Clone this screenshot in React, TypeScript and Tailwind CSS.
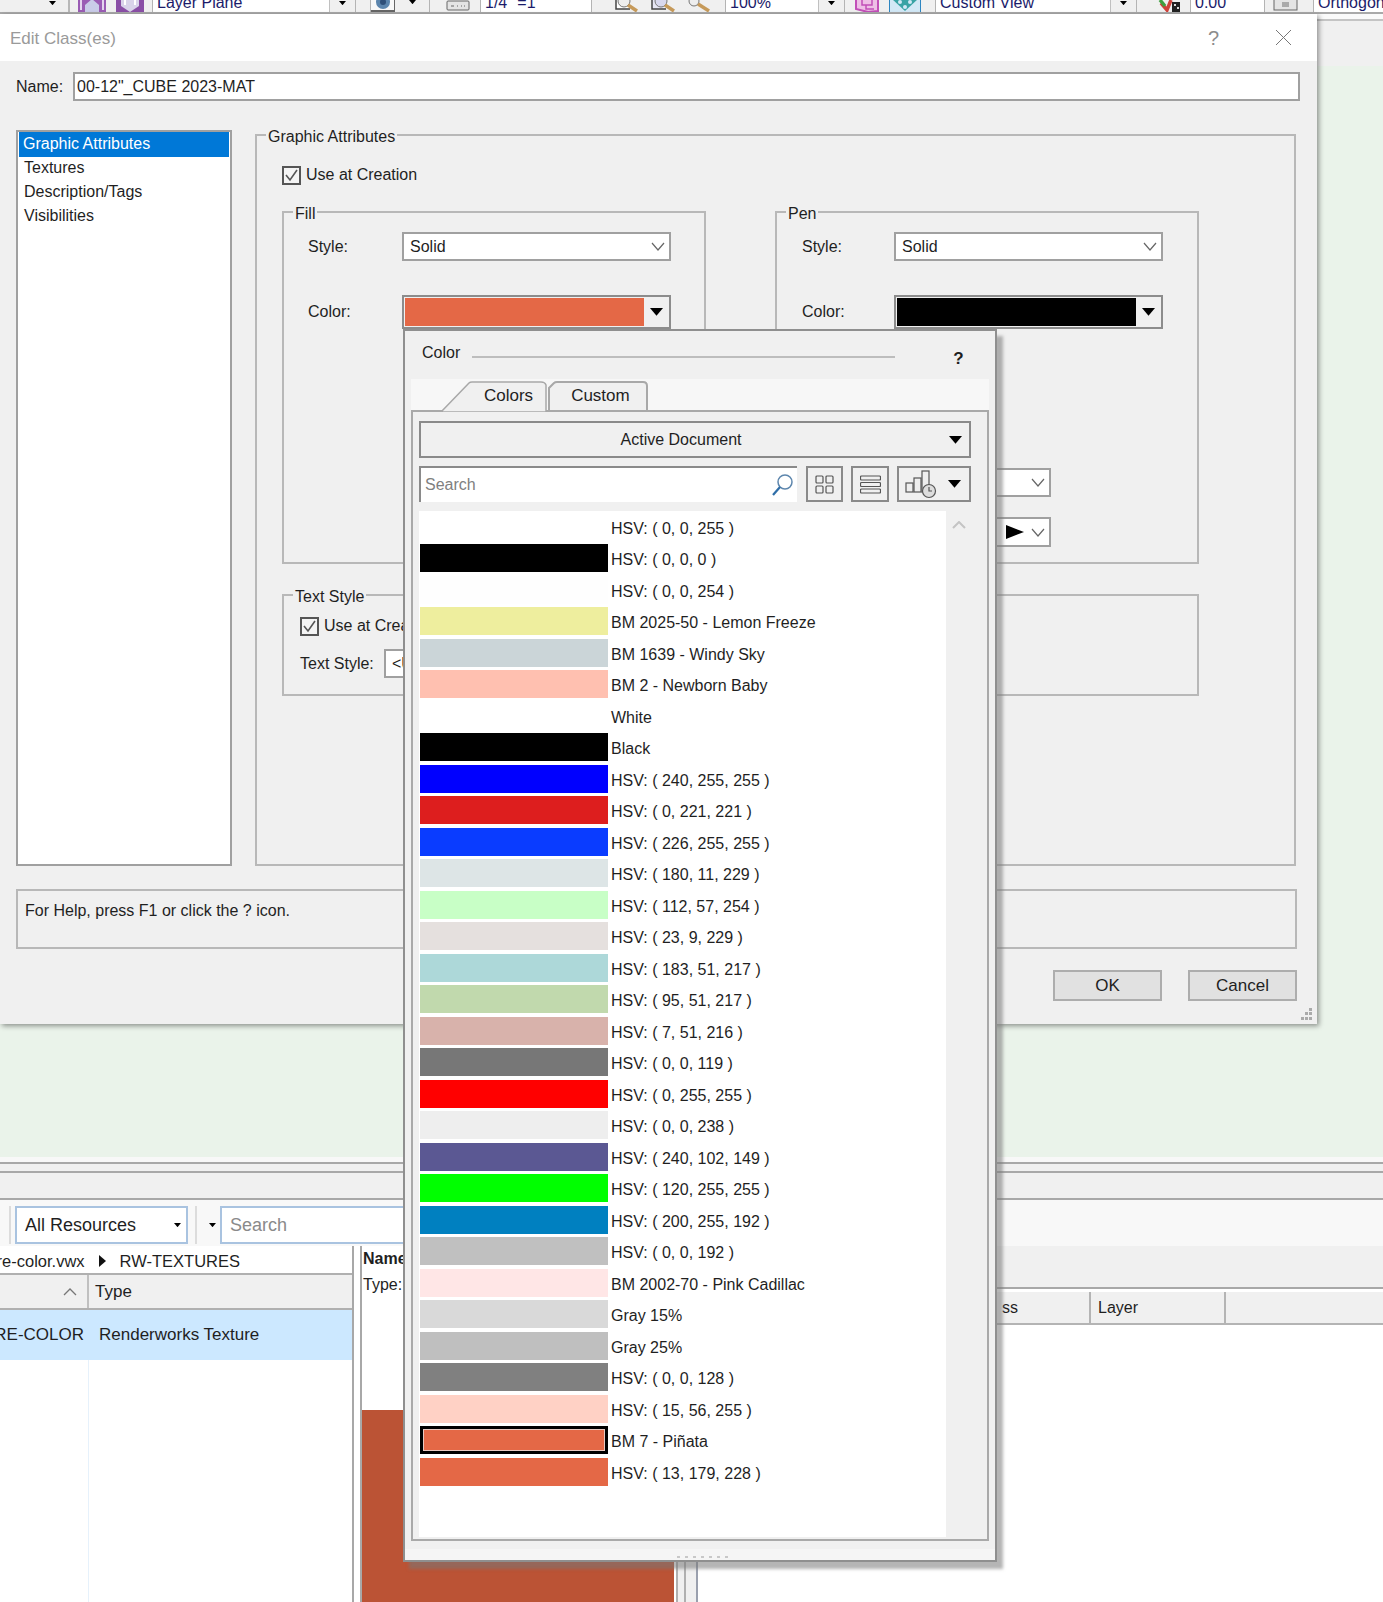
import React from 'react';

const FONT = '[font-family:"Liberation_Sans",Arial,sans-serif]';

const swatches: { color: string; label: string; selected?: boolean }[] = [
  { color: '#ffffff', label: 'HSV: ( 0, 0, 255 )' },
  { color: '#000000', label: 'HSV: ( 0, 0, 0 )' },
  { color: '#fefefe', label: 'HSV: ( 0, 0, 254 )' },
  { color: '#eeee9e', label: 'BM 2025-50 - Lemon Freeze' },
  { color: '#cbd5d8', label: 'BM 1639 - Windy Sky' },
  { color: '#ffc0b0', label: 'BM 2 - Newborn Baby' },
  { color: '#ffffff', label: 'White' },
  { color: '#000000', label: 'Black' },
  { color: '#0000ff', label: 'HSV: ( 240, 255, 255 )' },
  { color: '#dd1e1e', label: 'HSV: ( 0, 221, 221 )' },
  { color: '#0a3cff', label: 'HSV: ( 226, 255, 255 )' },
  { color: '#dde5e6', label: 'HSV: ( 180, 11, 229 )' },
  { color: '#c8ffc6', label: 'HSV: ( 112, 57, 254 )' },
  { color: '#e5e0de', label: 'HSV: ( 23, 9, 229 )' },
  { color: '#add8d9', label: 'HSV: ( 183, 51, 217 )' },
  { color: '#c1d9ad', label: 'HSV: ( 95, 51, 217 )' },
  { color: '#d8b2ab', label: 'HSV: ( 7, 51, 216 )' },
  { color: '#777777', label: 'HSV: ( 0, 0, 119 )' },
  { color: '#ff0000', label: 'HSV: ( 0, 255, 255 )' },
  { color: '#eeeeee', label: 'HSV: ( 0, 0, 238 )' },
  { color: '#5b5893', label: 'HSV: ( 240, 102, 149 )' },
  { color: '#00ff00', label: 'HSV: ( 120, 255, 255 )' },
  { color: '#0080c0', label: 'HSV: ( 200, 255, 192 )' },
  { color: '#c0c0c0', label: 'HSV: ( 0, 0, 192 )' },
  { color: '#ffe6e6', label: 'BM 2002-70 - Pink Cadillac' },
  { color: '#d9d9d9', label: 'Gray 15%' },
  { color: '#bfbfbf', label: 'Gray 25%' },
  { color: '#808080', label: 'HSV: ( 0, 0, 128 )' },
  { color: '#ffd1c5', label: 'HSV: ( 15, 56, 255 )' },
  { color: '#e46846', label: 'BM 7 - Piñata', selected: true },
  { color: '#e46846', label: 'HSV: ( 13, 179, 228 )' },
];

const Caret = ({ size = 14 }: { size?: number }) => (
  <svg width={size} height={size * 0.6} viewBox="0 0 10 6" className="shrink-0">
    <polygon points="0,0 10,0 5,6" fill="#000" />
  </svg>
);

const Chevron = () => (
  <svg width="14" height="9" viewBox="0 0 14 9" className="shrink-0">
    <polyline points="1,1 7,8 13,1" fill="none" stroke="#666" strokeWidth="1.2" />
  </svg>
);

const Checkbox = () => (
  <div className="flex h-[19px] w-[19px] shrink-0 items-center justify-center border-2 border-[#555] bg-[#f4f4f4]">
    <svg width="15" height="15" viewBox="0 0 15 15">
      <polyline points="2,7 6,12 13,2" fill="none" stroke="#555" strokeWidth="1.6" />
    </svg>
  </div>
);

const Group = ({
  label,
  className,
  children,
}: {
  label: string;
  className: string;
  children: React.ReactNode;
}) => (
  <fieldset className={`border-2 border-[#b8b8b8] ${className}`}>
    <legend className="ml-[9px] px-[2px] text-[16px] leading-[20px]">
      <span className="relative top-[2px]">{label}</span>
    </legend>
    {children}
  </fieldset>
);

const StyleSelect = () => (
  <div className="flex h-[29px] w-[269px] items-center justify-between border-2 border-[#a0a0a0] bg-white pl-[6px] pr-[4px]">
    <span>Solid</span>
    <Chevron />
  </div>
);

const ColorButton = ({ color }: { color: string }) => (
  <div className="flex h-[34px] w-[269px] items-center border-2 border-[#8c8c8c] bg-[#f0f0f0] pl-[1px]">
    <div className="h-[28px] w-[239px]" style={{ backgroundColor: color }} />
    <div className="flex flex-1 justify-center">
      <Caret size={13} />
    </div>
  </div>
);

const ToolField = ({ text, className }: { text: string; className: string }) => (
  <div className={`relative h-[12px] shrink-0 overflow-hidden border-x border-[#b4b4b4] bg-white ${className}`}>
    <div className="-mt-[6px] pl-[4px] text-[16px] leading-[18px] whitespace-nowrap text-[#1b1b6a]">{text}</div>
  </div>
);

const ToolSelect = ({ text, className }: { text: string; className: string }) => (
  <div className={`flex h-[12px] shrink-0 overflow-hidden border-x border-[#b4b4b4] bg-white ${className}`}>
    <div className="-mt-[6px] flex-1 pl-[4px] text-[16px] leading-[18px] whitespace-nowrap text-[#1b1b6a]">{text}</div>
    <div className="flex w-[26px] justify-center border-l border-[#c0c0c0] bg-[#f0f0f0] pt-[1px]">
      <Caret size={7} />
    </div>
  </div>
);

const Toolbar = () => (
  <div className="flex h-[14px] shrink-0 overflow-hidden border-b-2 border-[#a9a9a9] bg-[#f0f0f0]">
    <div className="flex w-[70px] shrink-0 justify-end border-r-2 border-[#b8b8b8] pt-[1px] pr-[12px]">
      <Caret size={7} />
    </div>
    <svg width="28" height="12" viewBox="0 0 28 12" className="ml-[8px] shrink-0">
      <rect x="0" y="-2" width="28" height="14" fill="#9a5cb4" />
      <path d="M7 12 V5 L14 -1 L21 5 V12 Z" fill="#c9cbe8" />
      <path d="M3 0 V10 M25 0 V10" stroke="#e4d5ee" strokeWidth="2" />
    </svg>
    <svg width="28" height="12" viewBox="0 0 28 12" className="ml-[10px] shrink-0">
      <rect x="0" y="-2" width="28" height="14" fill="#8a4fa6" />
      <path d="M5 -2 V6 L14 12 L23 6 V-2 Z" fill="#d9d3ea" />
      <path d="M9 0 V5 M19 0 V5" stroke="#fff" strokeWidth="2" />
    </svg>
    <ToolSelect text="Layer Plane" className="ml-[8px] w-[204px]" />
    <div className="ml-[14px] flex h-[12px] w-[60px] shrink-0 border-x border-[#b4b4b4]">
      <div className="flex w-[24px] justify-center border-r border-b-2 border-[#666] bg-[#f8f8f8]">
        <svg width="16" height="10" viewBox="0 0 16 10">
          <circle cx="8" cy="2" r="7" fill="#5c85ad" />
          <circle cx="8" cy="2" r="3" fill="#2f4f78" />
        </svg>
      </div>
      <div className="flex flex-1 justify-center">
        <Caret size={7} />
      </div>
    </div>
    <svg width="24" height="12" viewBox="0 0 24 12" className="ml-[16px] shrink-0">
      <rect x="1" y="1" width="22" height="9" rx="1" fill="#e4e4e4" stroke="#666" />
      <path d="M5 6h3M11 6h1M15 6h1M18 6h1" stroke="#666" />
    </svg>
    <ToolField text="1/4&quot; =1'" className="ml-[10px] w-[112px]" />
    <svg width="26" height="12" viewBox="0 0 26 12" className="ml-[22px] shrink-0">
      <path d="M2 -2 V9 H16" fill="#fff" stroke="#444" strokeWidth="1.5" />
      <circle cx="10" cy="1" r="6" fill="#eee" stroke="#777" />
      <path d="M14 5 L23 11" stroke="#c69a5a" strokeWidth="3.5" />
    </svg>
    <svg width="26" height="12" viewBox="0 0 26 12" className="ml-[10px] shrink-0">
      <path d="M2 -2 V9 H16" fill="#e6e6f4" stroke="#444" strokeWidth="1.5" />
      <circle cx="11" cy="1" r="6" fill="#d8d8ee" stroke="#777" />
      <path d="M15 5 L24 11" stroke="#c69a5a" strokeWidth="3.5" />
    </svg>
    <svg width="26" height="12" viewBox="0 0 26 12" className="ml-[10px] shrink-0">
      <circle cx="8" cy="1" r="5" fill="#eee" stroke="#777" />
      <path d="M12 4 L23 11" stroke="#c69a5a" strokeWidth="3.5" />
    </svg>
    <ToolSelect text="100%" className="ml-[13px] w-[120px]" />
    <svg width="26" height="13" viewBox="0 0 26 13" className="ml-[9px] shrink-0">
      <path d="M2 -2 V9 L14 12 L24 11 V-2 Z" fill="#eebfe6" stroke="#c24fb8" strokeWidth="2" />
      <path d="M8 -2 V5 H18 V-2 M12 5 V9 H20" fill="none" stroke="#c24fb8" strokeWidth="1.5" />
    </svg>
    <svg width="32" height="14" viewBox="0 0 32 14" className="ml-[9px] shrink-0">
      <rect x="0.5" y="-2" width="31" height="15" fill="#d2e8f6" stroke="#2e86c1" />
      <path d="M3 -1 L16 11 L29 -1 Z" fill="#38a3a5" />
      <circle cx="11" cy="2" r="2" fill="#d2e8f6" />
      <circle cx="21" cy="2" r="2" fill="#d2e8f6" />
      <circle cx="16" cy="7" r="2" fill="#d2e8f6" />
    </svg>
    <ToolSelect text="Custom View" className="ml-[14px] w-[202px]" />
    <svg width="26" height="12" viewBox="0 0 26 12" className="ml-[20px] shrink-0">
      <path d="M4 3 L10 10 L14 0" fill="none" stroke="#d0423a" strokeWidth="3.5" />
      <path d="M3 0 L8 6" stroke="#3f9f3f" strokeWidth="3.5" />
      <rect x="15" y="2" width="8" height="10" fill="#222" />
      <rect x="17" y="4" width="2" height="2" fill="#ddd" />
      <rect x="20" y="7" width="2" height="2" fill="#ddd" />
    </svg>
    <ToolField text="0.00" className="ml-[7px] w-[75px]" />
    <svg width="25" height="12" viewBox="0 0 25 12" className="ml-[8px] shrink-0">
      <rect x="1" y="-2" width="23" height="12" fill="#e4e4e4" stroke="#666" />
      <rect x="9" y="2" width="7" height="5" fill="#aaa" />
    </svg>
    <ToolField text="Orthogonal" className="ml-[15px] w-[80px]" />
  </div>
);

const MainWindow = () => (
  <div className="flex h-[1602px] w-[1383px] flex-col overflow-hidden bg-white text-[#1f1f1f]">
    <Toolbar />
    <div className="h-[52px] shrink-0 bg-[#f0f0f0]">
      <div className="h-[7px] border-b-2 border-[#c4c4c4] bg-[#fafafa]" />
    </div>
    <div className="h-[1091px] shrink-0 bg-[#eaf3ea]" />
    <div className="h-[5px] shrink-0 bg-[#f8f8f8]" />
    <div className="h-[11px] shrink-0 border-y-2 border-[#a8a8a8] bg-[#f0f0f0]" />
    <div className="h-[27px] shrink-0 border-b-2 border-[#a8a8a8] bg-[#f0f0f0]" />

    {/* resource manager toolbar */}
    <div className="flex h-[46px] shrink-0 items-start bg-[#f8f8f8] pt-[6px]">
      <div className="ml-[9px] h-[38px] w-[2px] bg-[#dcdcdc]" />
      <div className="ml-[4px] flex h-[38px] w-[173px] items-center justify-between border-2 border-[#a9c3e0] bg-white pl-[8px] pr-[5px] text-[18px]">
        <span>All Resources</span>
        <Caret size={7} />
      </div>
      <div className="ml-[7px] h-[38px] w-[2px] bg-[#dcdcdc]" />
      <div className="ml-[12px] flex h-[38px] items-center">
        <Caret size={7} />
      </div>
      <div className="ml-[4px] flex h-[38px] w-[300px] items-center border-2 border-[#a9c3e0] bg-white pl-[8px] text-[18px] text-[#8a8a8a]">
        Search
      </div>
    </div>

    <div className="flex min-h-0 flex-1">
      {/* resource list */}
      <div className="flex w-[354px] shrink-0 flex-col border-r-2 border-[#a8a8a8] bg-white">
        <div className="flex h-[27px] shrink-0 items-center justify-end overflow-hidden pr-[112px] pt-[3px] text-[16.5px] whitespace-nowrap">
          <span>re-color.vwx</span>
          <svg width="7" height="12" viewBox="0 0 7 12" className="mx-[14px] shrink-0">
            <polygon points="0,0 7,6 0,12" fill="#111" />
          </svg>
          <span>RW-TEXTURES</span>
        </div>
        <div className="flex h-[37px] shrink-0 border-y-2 border-[#b0b0b0] bg-[#f0f0f0]">
          <div className="flex w-[89px] items-center justify-end border-r-2 border-[#c0c0c0] pr-[10px]">
            <svg width="14" height="8" viewBox="0 0 14 8">
              <polyline points="1,7 7,1 13,7" fill="none" stroke="#777" strokeWidth="1.3" />
            </svg>
          </div>
          <div className="flex items-center pl-[6px] text-[17px]">Type</div>
        </div>
        <div className="flex h-[50px] shrink-0 items-center bg-[#cce8ff] text-[17px]">
          <div className="flex w-[89px] justify-end overflow-hidden pr-[5px] whitespace-nowrap">RE-COLOR</div>
          <div className="pl-[10px]">Renderworks Texture</div>
        </div>
        <div className="ml-[88px] w-[1px] flex-1 bg-[#e6f1fb]" />
      </div>

      {/* preview */}
      <div className="ml-[6px] flex w-[314px] shrink-0 flex-col border-l-2 border-[#a8a8a8] bg-white">
        <div className="h-[164px] shrink-0 pl-[1px] text-[16px] leading-[26px]">
          <div className="font-bold">Name</div>
          <div>Type:</div>
        </div>
        <div className="flex-1 bg-[#bb5335]" />
      </div>
      <div className="ml-[2px] w-[10px] shrink-0 border-x-2 border-[#b0b0b0] bg-[#f0f0f0]" />
      <div className="w-[12px] shrink-0 border-r-2 border-[#9aa0ae] bg-[#f0f0f0]" />

      {/* objects table */}
      <div className="flex min-w-0 flex-1 flex-col">
        <div className="h-[41px] shrink-0 bg-[#f0f0f0]" />
        <div className="h-[5px] shrink-0 border-t-2 border-[#a8a8a8] bg-white" />
        <div className="flex h-[33px] shrink-0 border-b-2 border-[#b4b4b4] bg-[#f0f0f0] text-[16px] leading-[31px]">
          <div className="w-[393px] border-r-2 border-[#b4b4b4] pl-[304px]">ss</div>
          <div className="w-[135px] border-r-2 border-[#b4b4b4] pl-[7px]">Layer</div>
        </div>
      </div>
    </div>
  </div>
);

const EditClassDialog = () => (
  <div className="absolute left-0 top-[14px] flex h-[1010px] w-[1317px] flex-col bg-[#f0f0f0] text-[16px] text-[#1f1f1f] shadow-[2px_2px_5px_rgba(0,0,0,0.4)]">
    <div className="flex h-[47px] shrink-0 items-center bg-white">
      <span className="pl-[10px] pt-[3px] text-[17px] text-[#9a9a9a]">Edit Class(es)</span>
      <span className="ml-auto text-[20px] font-light text-[#8c8c8c]">?</span>
      <svg width="17" height="17" viewBox="0 0 17 17" className="ml-[56px] mr-[25px]">
        <path d="M1 1 L16 16 M16 1 L1 16" stroke="#777" strokeWidth="1" />
      </svg>
    </div>

    <div className="mt-[11px] flex h-[29px] shrink-0 items-center pl-[16px] pr-[17px]">
      <span className="w-[57px]">Name:</span>
      <div className="flex h-[29px] flex-1 items-center border-2 border-[#a0a0a0] bg-white pl-[2px]">00-12"_CUBE 2023-MAT</div>
    </div>

    <div className="mt-[24px] flex h-[741px] shrink-0 pl-[16px]">
      <div className="mt-[5px] h-[736px] w-[216px] border-2 border-[#a0a0a0] bg-white px-[1px]">
        <div className="flex h-[25px] items-center bg-[#0078d7] pb-[2px] pl-[4px] text-white">Graphic Attributes</div>
        <div className="flex h-[24px] items-center pb-[2px] pl-[5px]">Textures</div>
        <div className="flex h-[24px] items-center pb-[2px] pl-[5px]">Description/Tags</div>
        <div className="flex h-[24px] items-center pb-[2px] pl-[5px]">Visibilities</div>
      </div>

      <Group label="Graphic Attributes" className="ml-[23px] h-[741px] w-[1041px]">
        <div className="pl-[25px] pt-[18px]">
          <div className="flex items-center gap-[5px]">
            <Checkbox />
            <span>Use at Creation</span>
          </div>
          <div className="mt-[15px] flex gap-[69px]">
            <Group label="Fill" className="h-[362px] w-[424px]">
              <div className="flex items-center pt-[10px]">
                <span className="w-[118px] pl-[24px]">Style:</span>
                <StyleSelect />
              </div>
              <div className="mt-[34px] flex items-center">
                <span className="w-[118px] pl-[24px]">Color:</span>
                <ColorButton color="#e46846" />
              </div>
            </Group>
            <Group label="Pen" className="h-[362px] w-[424px]">
              <div className="flex items-center pt-[10px]">
                <span className="w-[117px] pl-[25px]">Style:</span>
                <StyleSelect />
              </div>
              <div className="mt-[34px] flex items-center">
                <span className="w-[117px] pl-[25px]">Color:</span>
                <ColorButton color="#000000" />
              </div>
              <div className="ml-[117px] mt-[139px] flex h-[29px] w-[157px] items-center justify-end border-2 border-[#a0a0a0] bg-white pr-[4px]">
                <Chevron />
              </div>
              <div className="ml-[117px] mt-[20px] flex h-[30px] w-[157px] items-center justify-end gap-[7px] border-2 border-[#a0a0a0] bg-white pr-[4px]">
                <svg width="18" height="14" viewBox="0 0 18 14">
                  <polygon points="0,0 18,7 0,14" fill="#000" />
                </svg>
                <Chevron />
              </div>
            </Group>
          </div>
          <Group label="Text Style" className="mt-[21px] h-[111px] w-[917px]">
            <div className="flex items-center gap-[5px] pl-[16px] pt-[9px]">
              <Checkbox />
              <span className="whitespace-nowrap">Use at Creation</span>
            </div>
            <div className="mt-[11px] flex items-center pl-[16px]">
              <span className="w-[84px]">Text Style:</span>
              <div className="flex h-[29px] w-[220px] items-center border-2 border-[#a0a0a0] bg-white pl-[6px]">&lt;Unstyled&gt;</div>
            </div>
          </Group>
        </div>
      </Group>
    </div>

    <div className="ml-[16px] mt-[23px] h-[60px] w-[1281px] shrink-0 border-2 border-[#b8b8b8] pl-[7px] pt-[8px]">
      For Help, press F1 or click the ? icon.
    </div>

    <div className="mt-[21px] flex shrink-0 justify-end gap-[26px] pr-[20px]">
      <div className="flex h-[31px] w-[109px] items-center justify-center border-2 border-[#adadad] bg-[#e1e1e1] text-[17px]">OK</div>
      <div className="flex h-[31px] w-[109px] items-center justify-center border-2 border-[#adadad] bg-[#e1e1e1] text-[17px]">Cancel</div>
    </div>

    {/* resize grip */}
    <svg width="13" height="13" viewBox="0 0 13 13" className="absolute bottom-[3px] right-[4px]">
      <g fill="#aaa">
        <rect x="9" y="0" width="3" height="3" />
        <rect x="5" y="4" width="3" height="3" />
        <rect x="9" y="4" width="3" height="3" />
        <rect x="1" y="9" width="3" height="3" />
        <rect x="5" y="9" width="3" height="3" />
        <rect x="9" y="9" width="3" height="3" />
      </g>
    </svg>
  </div>
);

const ColorPopup = () => (
  <div className="absolute left-[403px] top-[329px] flex h-[1233px] w-[594px] flex-col border-2 border-[#8f8f8f] bg-[#f0f0f0] text-[16px] text-[#1f1f1f] shadow-[6px_7px_3px_rgba(120,120,120,0.55)]">
    <div className="flex h-[48px] shrink-0 items-start pl-[17px]">
      <span className="mt-[12px] leading-[20px]">Color</span>
      <div className="ml-[12px] mt-[25px] h-[2px] w-[423px] bg-[#bdbdbd]" />
      <span className="ml-[58px] mt-[18px] text-[17px] font-bold leading-[20px]">?</span>
    </div>

    {/* tab strip */}
    <div className="relative mx-[6px] flex h-[31px] shrink-0 items-center bg-[#f7f7f7] pt-[3px]">
      <svg width="240" height="33" viewBox="0 0 240 33" className="absolute left-0 top-0">
        <path d="M30 33 L58 4 Q59 3 61 3 H130 Q134 3 135 6 V33 Z" fill="#f0f0f0" stroke="#a8a8a8" strokeWidth="1.5" />
        <path d="M138 31 V9 L143 4 Q144 3 146 3 H232 Q236 3 236 7 V31" fill="#f0f0f0" stroke="#a8a8a8" strokeWidth="2" />
      </svg>
      <span className="relative ml-[73px] text-[17px]">Colors</span>
      <span className="relative ml-[38px] text-[17px]">Custom</span>
    </div>

    {/* tab panel */}
    <div className="mx-[6px] flex h-[1131px] shrink-0 flex-col border-2 border-[#a9a9a9] pl-[6px] pt-[9px]">
      <div className="relative flex h-[37px] w-[552px] shrink-0 items-center justify-center border-2 border-[#8a8a8a]">
        <span className="-ml-[28px]">Active Document</span>
        <div className="absolute right-[7px] top-[13px]">
          <Caret size={13} />
        </div>
      </div>
      <div className="mt-[8px] flex h-[36px] shrink-0 gap-[8px]">
        <div className="flex w-[378px] items-center justify-between border-l-2 border-t-2 border-[#8a8a8a] bg-white pl-[4px] pr-[3px] text-[#808080]">
          <span>Search</span>
          <svg width="24" height="24" viewBox="0 0 24 24">
            <circle cx="15" cy="9" r="7" fill="none" stroke="#5d86ad" strokeWidth="1.5" />
            <path d="M10 14 L3 22" stroke="#2f6ea8" strokeWidth="2.2" />
          </svg>
        </div>
        <div className="ml-[1px] flex w-[37px] items-center justify-center border-2 border-[#8a8a8a]">
          <svg width="19" height="19" viewBox="0 0 19 19" fill="none" stroke="#555" strokeWidth="1.2">
            <rect x="1" y="1" width="7" height="7" rx="1" />
            <rect x="11" y="1" width="7" height="7" rx="1" />
            <rect x="1" y="11" width="7" height="7" rx="1" />
            <rect x="11" y="11" width="7" height="7" rx="1" />
          </svg>
        </div>
        <div className="flex w-[38px] items-center justify-center border-2 border-[#8a8a8a]">
          <svg width="21" height="19" viewBox="0 0 21 19" fill="none" stroke="#555" strokeWidth="1.2">
            <rect x="0.5" y="1" width="20" height="4" rx="1" />
            <rect x="0.5" y="7.5" width="20" height="4" rx="1" />
            <rect x="0.5" y="14" width="20" height="4" rx="1" />
          </svg>
        </div>
        <div className="flex w-[74px] items-center border-2 border-[#8a8a8a] pl-[6px]">
          <svg width="32" height="30" viewBox="0 0 32 30" fill="#eee" stroke="#555" strokeWidth="1.2">
            <rect x="1" y="14" width="7" height="9" />
            <rect x="9" y="9" width="7" height="14" />
            <rect x="17" y="2" width="7" height="21" />
            <circle cx="24" cy="22" r="6.5" fill="#ddd" />
            <path d="M24 18 V22 H27" fill="none" />
          </svg>
          <div className="ml-[11px]">
            <Caret size={13} />
          </div>
        </div>
      </div>
      <div className="mt-[9px] flex h-[1026px] shrink-0">
        <div className="w-[527px] overflow-hidden bg-white">
          {swatches.map((s, i) => (
            <div key={i} className="flex h-[31.5px] items-center">
              <div
                className={`ml-[1px] h-[28px] w-[188px] shrink-0 ${s.selected ? 'border-[3px] border-black outline outline-1 -outline-offset-4 outline-[#e8c8c0]' : ''}`}
                style={{ backgroundColor: s.color }}
              />
              <span className="ml-[3px] whitespace-nowrap pt-[4px]">{s.label}</span>
            </div>
          ))}
        </div>
        <div className="flex w-[25px] justify-center pt-[10px]">
          <svg width="14" height="8" viewBox="0 0 14 8">
            <polyline points="1,7 7,1 13,7" fill="none" stroke="#c4c4c4" strokeWidth="2" />
          </svg>
        </div>
      </div>
    </div>

    {/* resize handle */}
    <div className="mt-[8px] flex h-[11px] shrink-0 items-center justify-center gap-[5px] bg-[#f5f5f5] pl-[4px] pt-[4px]">
      {[0, 1, 2, 3, 4, 5, 6].map((n) => (
        <div key={n} className="h-[2px] w-[3px] bg-[#c8c8c8]" />
      ))}
    </div>
  </div>
);

export default function App() {
  return (
    <div className={`relative h-[1602px] w-[1383px] overflow-hidden text-[16px] ${FONT}`}>
      <MainWindow />
      <EditClassDialog />
      <ColorPopup />
    </div>
  );
}
